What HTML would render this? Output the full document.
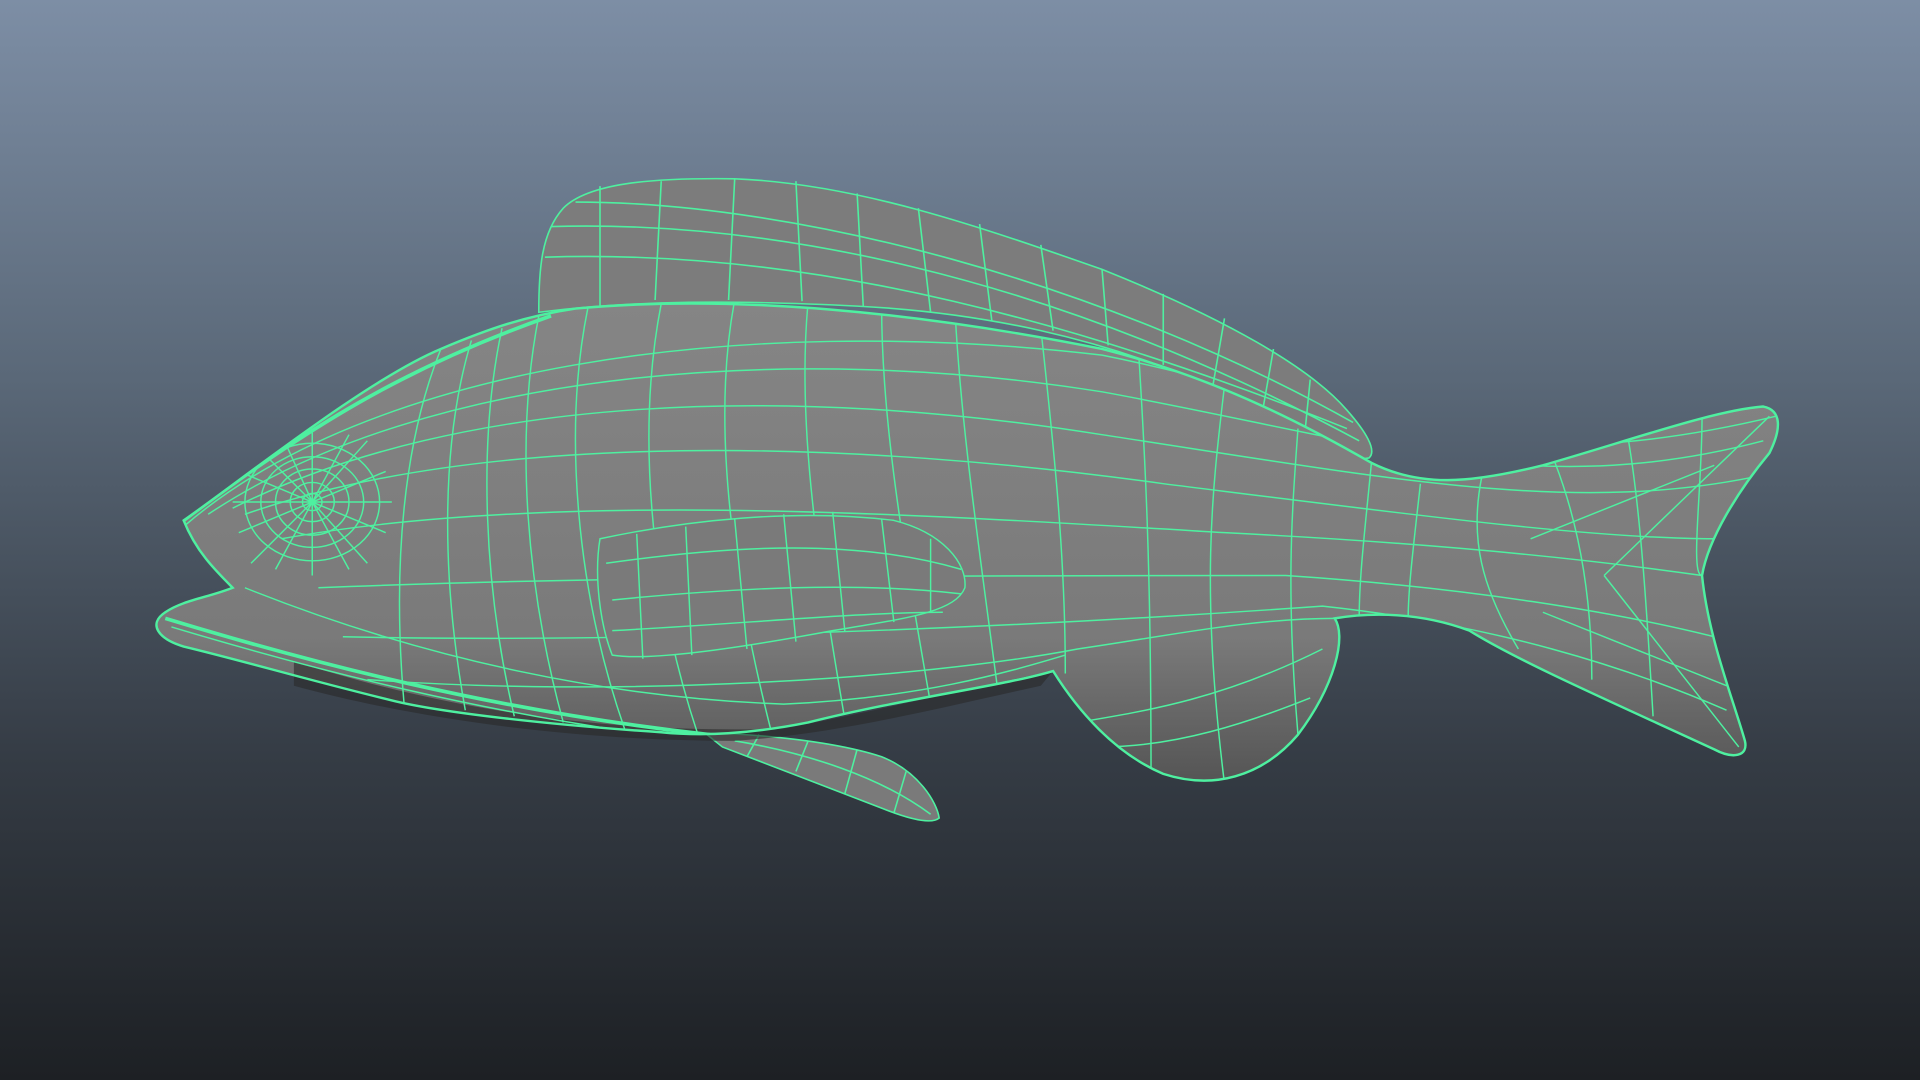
<!DOCTYPE html>
<html><head><meta charset="utf-8"><style>html,body{margin:0;padding:0;width:1920px;height:1080px;overflow:hidden;background:#3a4048}</style></head>
<body>
<svg width="1920" height="1080" viewBox="0 0 1568 882" xmlns="http://www.w3.org/2000/svg">
<defs>
<linearGradient id="bg" x1="0" y1="0" x2="0" y2="1">
<stop offset="0" stop-color="#7d8ea5"/><stop offset="0.35" stop-color="#5a6878"/><stop offset="0.7" stop-color="#353c45"/><stop offset="1" stop-color="#1d2024"/></linearGradient>
<linearGradient id="body" x1="0" y1="0" x2="0" y2="1">
<stop offset="0" stop-color="#858585"/><stop offset="0.7" stop-color="#7a7a7a"/><stop offset="1" stop-color="#555"/></linearGradient>
<clipPath id="bc"><path id="bp" d="M150,425 C200,390 300,310 360,285 C400,268 430,258 470,252 C600,240 750,255 900,285 C1000,310 1080,355 1120,378 C1160,398 1200,395 1260,380 C1330,360 1400,335 1440,332 C1455,335 1455,350 1445,370 C1420,400 1395,440 1390,470 C1395,520 1415,570 1425,605 C1428,618 1415,620 1400,612 C1320,575 1240,540 1200,515 C1160,500 1120,500 1090,505 C1100,520 1090,560 1060,600 C1030,635 990,645 950,632 C910,615 880,580 860,548 C820,560 740,570 660,590 C620,598 580,602 540,598 C450,592 360,582 320,572 C250,555 200,540 150,528 C130,522 120,510 135,500 C150,490 170,488 190,480 C175,465 160,450 150,425Z"/></clipPath>
</defs>
<rect width="1568" height="882" fill="url(#bg)"/>
<g stroke="#4ef0a0" stroke-width="1.3" fill="none">
<!-- dorsal fin -->
<path d="M440,255 C440,220 442,190 460,170 C480,150 530,145 600,146 C700,150 800,185 900,220 C1000,260 1070,300 1100,335 C1115,352 1125,368 1118,374 C1100,378 1060,360 1000,320 C900,275 800,255 700,250 C600,245 520,245 440,255Z" fill="#7c7c7c"/>
<path d="M445,210 C600,205 800,230 1100,350 M450,185 C620,180 850,220 1110,360 M470,165 C650,165 900,230 1105,345"/>
<path d="M490,152 L490,250 M540,148 L535,245 M600,146 L595,245 M650,148 L655,246 M700,158 L705,250 M750,170 L760,255 M800,183 L810,262 M850,200 L860,270 M900,220 L905,282 M950,240 L950,298 M1000,260 L990,318 M1040,285 L1030,342 M1070,310 L1065,360"/>
<!-- pelvic fin -->
<path d="M575,598 C620,600 680,605 720,618 C750,630 765,655 767,668 C760,674 740,668 720,660 C680,645 630,625 590,610Z" fill="#7a7a7a"/>
<path d="M600,605 C660,615 720,635 760,665 M620,600 L610,618 M660,605 L650,630 M700,612 L690,648 M740,630 L730,664"/>
</g>
<use href="#bp" fill="url(#body)"/>
<path d="M240,540 C350,575 480,600 640,595 C720,580 800,560 860,548 L850,560 C760,580 680,600 600,605 C480,605 350,590 240,560Z" fill="#2a2a2a" opacity="0.6"/>
<g clip-path="url(#bc)" stroke="#4ef0a0" stroke-width="1.2" fill="none">
<!-- longitudinal lines -->
<path d="M150,430 C300,300 600,255 900,290 C1100,330 1200,400 1450,340"/>
<path d="M170,420 C350,300 650,280 900,320 C1120,360 1250,410 1440,360"/>
<path d="M190,415 C380,320 650,315 900,355 C1130,390 1280,420 1430,390"/>
<path d="M200,420 C400,350 700,360 950,395 C1150,420 1300,440 1400,440"/>
<path d="M230,440 C450,400 750,420 1000,435 C1200,445 1320,460 1390,470"/>
<path d="M260,480 C500,470 800,470 1050,470 C1200,480 1320,500 1400,520"/>
<path d="M280,520 C500,525 800,515 1080,495 C1220,510 1330,545 1410,580"/>
<path d="M300,555 C500,570 750,555 880,530 M880,530 C950,520 1020,505 1090,505"/>
<path d="M200,480 C350,540 500,570 640,575 C750,570 820,550 870,535"/>
<!-- vertical lines -->
<path d="M360,285 C330,360 320,460 330,575"/>
<path d="M385,278 C360,360 360,470 380,580"/>
<path d="M410,268 C390,360 395,480 420,585"/>
<path d="M440,258 C420,360 430,480 460,590"/>
<path d="M480,252 C460,350 470,480 510,595"/>
<path d="M540,248 C520,350 530,480 570,600"/>
<path d="M600,245 C580,350 600,480 630,598"/>
<path d="M660,246 C650,350 670,470 690,588"/>
<path d="M720,250 C720,350 740,460 760,575"/>
<path d="M780,255 C785,350 800,450 815,565"/>
<path d="M850,268 C860,360 870,450 870,550"/>
<path d="M930,290 C935,370 940,460 940,630"/>
<path d="M1000,315 C990,400 980,480 1000,640"/>
<path d="M1060,350 C1055,420 1050,480 1060,600"/>
<path d="M1120,378 C1115,430 1110,470 1110,505"/>
<path d="M1160,395 C1155,440 1150,480 1150,505"/>
<path d="M1210,390 C1200,440 1210,480 1240,530"/>
<path d="M1270,378 C1290,430 1300,490 1300,555"/>
<path d="M1330,360 C1340,420 1345,500 1350,585"/>
<path d="M1390,340 C1390,400 1380,470 1390,470"/>
<path d="M1310,470 L1445,340 M1310,470 L1420,610 M1250,440 L1400,380 M1260,500 L1410,560"/>
<path d="M880,590 C940,580 1000,570 1080,530 M900,610 C960,610 1020,590 1070,570"/>
<!-- pectoral fin -->
<path d="M490,440 C560,425 650,415 730,425 C770,435 790,460 788,480 C780,500 740,505 680,515 C600,530 530,540 500,535 C490,510 485,470 490,440Z" fill="#7a7a7a"/>
<path d="M495,460 C600,445 700,440 785,465 M500,490 C600,480 700,475 785,485 M500,515 C600,510 700,500 770,500"/>
<path d="M520,436 L525,538 M560,430 L565,535 M600,424 L610,530 M640,420 L650,524 M680,418 L690,516 M720,424 L730,508 M760,440 L760,500"/>
<!-- head -->
<ellipse cx="255" cy="410" rx="55" ry="48"/>
<ellipse cx="255" cy="410" rx="42" ry="37"/>
<ellipse cx="255" cy="410" rx="30" ry="27"/>
<ellipse cx="255" cy="410" rx="18" ry="16"/>
<ellipse cx="255" cy="410" rx="8" ry="7"/>
<path d="M255,410 L255,350 M255,410 L300,360 M255,410 L320,410 M255,410 L300,460 M255,410 L255,470 M255,410 L205,460 M255,410 L190,410 M255,410 L205,360 M255,410 L230,355 M255,410 L285,355 M255,410 L315,385 M255,410 L315,435 M255,410 L285,465 M255,410 L225,465 M255,410 L195,435 M255,410 L195,385"/>
<path d="M150,425 C250,350 330,300 450,258" stroke-width="3"/>
<path d="M135,505 C250,540 400,580 580,600" stroke-width="3"/>
<path d="M140,512 C250,545 400,585 570,605" />
</g>
<use href="#bp" fill="none" stroke="#4ef0a0" stroke-width="2"/>
</svg>
</body></html>
